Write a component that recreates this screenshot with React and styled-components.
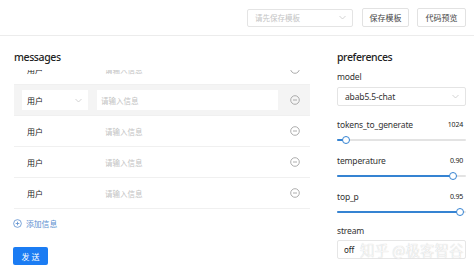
import React from 'react';
import styled, { createGlobalStyle } from 'styled-components';

const GlobalStyle = createGlobalStyle`
  html, body {
    margin: 0;
    padding: 0;
    background: #fff;
  }
  body {
    font-family: "Noto Sans", "Noto Sans CJK SC", sans-serif;
    color: #333;
  }
`;

const Page = styled.div`
  position: relative;
  width: 474px;
  height: 272px;
  overflow: hidden;
  background: #fff;
`;

const Header = styled.div`
  height: 35px;
  border-bottom: 1px solid #ececec;
  display: flex;
  align-items: center;
  justify-content: flex-end;
  gap: 8px;
  padding-right: 8px;
`;

const HeaderSelect = styled.div`
  width: 106px;
  height: 18px;
  box-sizing: border-box;
  border: 1px solid #e4e4e4;
  border-radius: 2px;
  display: flex;
  align-items: center;
  justify-content: space-between;
  padding: 0 6px 0 7px;
  font-size: 7.5px;
  color: #c4c4c4;
  margin-right: 1px;
`;

const HeaderButton = styled.button`
  height: 19px;
  width: ${({ w }) => w}px;
  box-sizing: border-box;
  border: 1px solid #e2e2e2;
  border-radius: 2px;
  background: #fff;
  font-family: "Noto Sans", "Noto Sans CJK SC", sans-serif;
  font-size: 8px;
  color: #444;
  padding: 0;
`;

const Main = styled.div`
  display: grid;
  grid-template-columns: 296px 1fr;
  gap: 27px;
  padding: 0 8px 0 14px;
`;

const Panel = styled.div`
  display: flex;
  flex-direction: column;
`;

const Title = styled.div`
  font-size: 10.5px;
  font-weight: 500;
  letter-spacing: -0.4px;
  color: #222;
  line-height: 20px;
  margin-top: 11px;
`;

// the list is scrolled a little, so the first row shows cut at the top
const ListClip = styled.div`
  height: 139px;
  margin-top: 3px;
  overflow: hidden;
`;

const List = styled.div`
  margin-top: -16px;
`;

const Row = styled.div`
  height: 31px;
  box-sizing: border-box;
  display: flex;
  align-items: center;
  padding: 0 10px 0 8px;
  border-bottom: 1px solid #f0f0f0;
  background: ${({ active }) => (active ? '#f4f4f4' : 'transparent')};
`;

const RoleSelect = styled.div`
  width: 66px;
  height: 20px;
  box-sizing: border-box;
  display: flex;
  align-items: center;
  justify-content: space-between;
  padding: 0 6px 0 5px;
  font-size: 8px;
  color: #222;
  background: ${({ active }) => (active ? '#fff' : 'transparent')};
`;

const MsgInput = styled.div`
  flex: 1;
  height: 20px;
  margin: 0 12px 0 9px;
  display: flex;
  align-items: center;
  padding-left: ${({ active }) => (active ? 4 : 8)}px;
  font-size: 7.5px;
  color: #c2c2c2;
  background: ${({ active }) => (active ? '#fff' : 'transparent')};
`;

const AddLink = styled.div`
  display: flex;
  align-items: center;
  gap: 4px;
  margin: 7px 0 0 -1px;
  height: 14px;
  font-size: 7.8px;
  color: #5b8fd0;
`;

const SendButton = styled.button`
  margin: 17px 0 0 -1px;
  width: 35px;
  height: 18px;
  border: none;
  border-radius: 2px;
  background: #1b7cf3;
  color: #fff;
  font-family: "Noto Sans", "Noto Sans CJK SC", sans-serif;
  font-size: 8px;
  letter-spacing: 2px;
  padding: 0 0 0 2px;
`;

const Label = styled.div`
  display: flex;
  justify-content: space-between;
  align-items: center;
  font-size: 8.5px;
  letter-spacing: -0.15px;
  color: #333;
  line-height: 14px;
  margin-top: ${({ mt }) => mt}px;
`;

const Value = styled.span`
  font-size: 7px;
  letter-spacing: -0.2px;
  color: #222;
  margin-right: 3px;
`;

const ModelSelect = styled.div`
  height: 19px;
  box-sizing: border-box;
  border: 1px solid #e4e4e4;
  border-radius: 2px;
  margin-top: 3px;
  display: flex;
  align-items: center;
  justify-content: space-between;
  padding: 0 6px 0 7px;
  font-size: 8.5px;
  letter-spacing: -0.15px;
  color: #333;
`;

const Track = styled.div`
  position: relative;
  height: 2px;
  background: #e3e3e3;
  border-radius: 1px;
  margin: 7px 0 0;
`;

const Fill = styled.div`
  height: 100%;
  background: #3583d2;
  border-radius: 1px;
`;

const Thumb = styled.div`
  position: absolute;
  top: -3px;
  width: 6px;
  height: 6px;
  margin-left: -4px;
  border: 1px solid #3583d2;
  border-radius: 50%;
  background: #fff;
`;

const StreamBox = styled.div`
  height: 19px;
  box-sizing: border-box;
  border: 1px solid #e6e6e6;
  border-radius: 2px;
  margin-top: 2px;
  display: flex;
  align-items: center;
  padding-left: 6px;
  font-size: 8px;
  color: #222;
`;

const Watermark = styled.div`
  position: absolute;
  left: 360px;
  top: 240px;
  font-family: "Noto Sans CJK SC", sans-serif;
  font-size: 14.5px;
  font-weight: 300;
  line-height: 20px;
  color: rgba(255, 255, 255, 0.95);
  text-shadow: 0 0 1px #b4b4b4;
  pointer-events: none;
`;

const Chevron = ({ color = '#c8c8c8' }) => (
  <svg width="7" height="5" viewBox="0 0 7 5">
    <path d="M0.5 1 L3.5 4 L6.5 1" fill="none" stroke={color} strokeWidth="0.8" />
  </svg>
);

const MinusCircle = () => (
  <svg width="10" height="10" viewBox="0 0 10 10">
    <circle cx="5" cy="5" r="4.3" fill="none" stroke="#999" strokeWidth="0.8" />
    <path d="M3 5 H7" stroke="#999" strokeWidth="0.8" />
  </svg>
);

const PlusCircle = () => (
  <svg width="9" height="9" viewBox="0 0 10 10">
    <circle cx="5" cy="5" r="4.3" fill="none" stroke="#5b8fd0" strokeWidth="0.9" />
    <path d="M3 5 H7 M5 3 V7" stroke="#5b8fd0" strokeWidth="0.9" />
  </svg>
);

const Slider = ({ pct }) => (
  <Track>
    <Fill style={{ width: `${pct}%` }} />
    <Thumb style={{ left: `${pct}%` }} />
  </Track>
);

const rows = [false, true, false, false, false];

const sliders = [
  { name: 'tokens_to_generate', value: '1024', pct: 7, mt: 12 },
  { name: 'temperature', value: '0.90', pct: 90, mt: 13 },
  { name: 'top_p', value: '0.95', pct: 95, mt: 13 },
];

export default function App() {
  return (
    <Page>
      <GlobalStyle />
      <Header>
        <HeaderSelect>
          <span>请先保存模板</span>
          <Chevron />
        </HeaderSelect>
        <HeaderButton w={47}>保存模板</HeaderButton>
        <HeaderButton w={49}>代码预览</HeaderButton>
      </Header>
      <Main>
        <Panel>
          <Title>messages</Title>
          <ListClip>
            <List>
              {rows.map((active, i) => (
                <Row key={i} active={active}>
                  <RoleSelect active={active}>
                    <span>用户</span>
                    {active && <Chevron />}
                  </RoleSelect>
                  <MsgInput active={active}>请输入信息</MsgInput>
                  <MinusCircle />
                </Row>
              ))}
            </List>
          </ListClip>
          <AddLink>
            <PlusCircle />
            <span>添加信息</span>
          </AddLink>
          <div>
            <SendButton>发送</SendButton>
          </div>
        </Panel>
        <Panel>
          <Title>preferences</Title>
          <Label mt={3}>model</Label>
          <ModelSelect>
            <span>abab5.5-chat</span>
            <Chevron />
          </ModelSelect>
          {sliders.map((s) => (
            <React.Fragment key={s.name}>
              <Label mt={s.mt}>
                <span>{s.name}</span>
                <Value>{s.value}</Value>
              </Label>
              <Slider pct={s.pct} />
            </React.Fragment>
          ))}
          <Label mt={11}>stream</Label>
          <StreamBox>off</StreamBox>
        </Panel>
      </Main>
      <Watermark>知乎 @极客智谷</Watermark>
    </Page>
  );
}
